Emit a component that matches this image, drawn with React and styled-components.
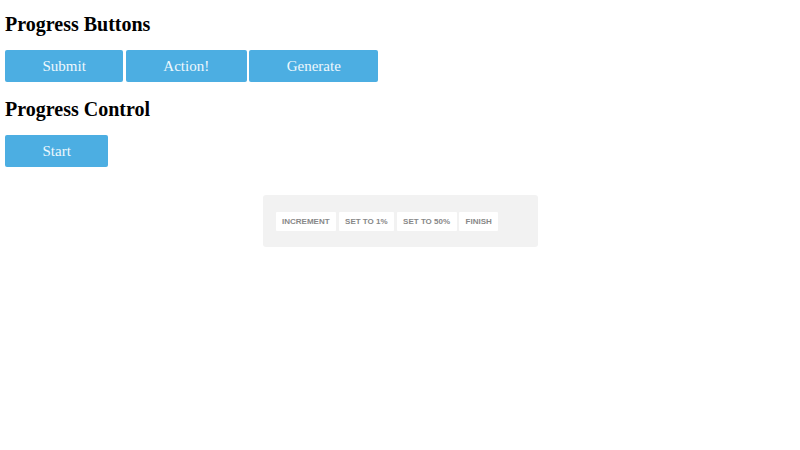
import React from "react";
import styled, { createGlobalStyle } from "styled-components";

const GlobalStyle = createGlobalStyle`
  html, body {
    margin: 0;
    padding: 0;
    background: #fff;
    font-family: "Liberation Serif", "Times New Roman", serif;
  }
`;

const Page = styled.div`
  padding: 13px 5px 0;
`;

const Title = styled.h2`
  margin: 0 0 14px;
  font-size: 20px;
  font-weight: bold;
  line-height: 23px;
  color: #000;
`;

const ButtonRow = styled.div`
  display: flex;
  gap: 2.5px;
  margin-bottom: ${(p) => p.spacing || "16px"};
`;

const ProgressButton = styled.button`
  height: 32px;
  padding: 0 37.5px;
  border: none;
  border-radius: 2px;
  background: #4caee2;
  color: #eef8fd;
  font-family: "Liberation Serif", "Times New Roman", serif;
  font-size: 15px;
  cursor: pointer;
`;

const ControlPanel = styled.div`
  box-sizing: border-box;
  width: 275px;
  margin: 28px auto 0;
  padding: 17px 13px 16px;
  background: #f2f2f2;
  border-radius: 3px;
  display: flex;
  gap: 2.5px;
`;

const ControlButton = styled.button`
  height: 19px;
  padding: 0 6.5px;
  border: none;
  border-radius: 1px;
  background: #fff;
  color: #888;
  font-family: "Liberation Sans", Arial, sans-serif;
  font-size: 8px;
  font-weight: bold;
  text-transform: uppercase;
  cursor: pointer;
`;

export default function App() {
  return (
    <Page>
      <GlobalStyle />
      <Title>Progress Buttons</Title>
      <ButtonRow>
        <ProgressButton>Submit</ProgressButton>
        <ProgressButton>Action!</ProgressButton>
        <ProgressButton>Generate</ProgressButton>
      </ButtonRow>
      <Title>Progress Control</Title>
      <ButtonRow spacing="0">
        <ProgressButton>Start</ProgressButton>
      </ButtonRow>
      <ControlPanel>
        <ControlButton>Increment</ControlButton>
        <ControlButton>Set to 1%</ControlButton>
        <ControlButton>Set to 50%</ControlButton>
        <ControlButton>Finish</ControlButton>
      </ControlPanel>
    </Page>
  );
}
